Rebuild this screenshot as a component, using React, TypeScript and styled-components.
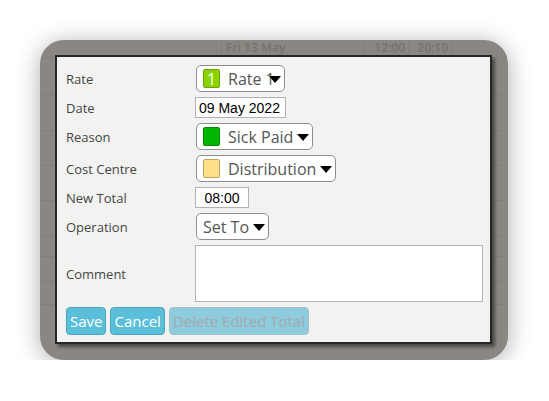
import styled, { createGlobalStyle } from 'styled-components';

const GlobalStyle = createGlobalStyle`
  body {
    margin: 0;
    background: #ffffff;
    font-family: "Open Sans", "Liberation Sans", sans-serif;
  }
`

const swatches: Record<string, { bg: string, border: string }> = {
  rate: { bg: '#8cd400', border: '#6e9e0a' },
  sick: { bg: '#00b600', border: '#078a07' },
  dist: { bg: '#ffdf88', border: '#c3a35c' },
}

const behindRows = [
  { h: 17, cells: ['', 'Fri 13 May', '12:00', '20:10', ''] },
  { h: 36, cells: ['', '', '', '', ''] },
  { h: 35, cells: ['', '', '', '', ''] },
  { h: 34, cells: ['', '', '', '', ''] },
  { h: 34, cells: ['', '', '', '', ''] },
  { h: 34, cells: ['', '', '', '', ''] },
  { h: 20, cells: ['', '', '', '', ''] },
  { h: 24, cells: ['', '', '', '', ''] },
  { h: 22, cells: ['', '', '', '', ''] },
]

const Select = (props: { text: string, swatch?: string, mark?: string, width?: number }) => {
  const sw = props.swatch ? swatches[props.swatch] : null
  return (
    <SelectBox fixedWidth={props.width}>
      {sw && <Swatch bg={sw.bg} edge={sw.border}>{props.mark}</Swatch>}
      <SelectText>{props.text}</SelectText>
      <Arrow />
    </SelectBox>
  )
}

const App = () => {
  return (
    <Page>
      <GlobalStyle />
      <Frame>
        <Behind>
          {behindRows.map((row, i) => (
            <BehindRow key={i} h={row.h}>
              {row.cells.map((c, j) => (
                <BehindCell key={j} col={j}>{c}</BehindCell>
              ))}
            </BehindRow>
          ))}
        </Behind>
        <Dialog>
          <Form>
            <Label>Rate</Label>
            <Select text="Rate 1" swatch="rate" mark="1" width={89} />

            <Label>Date</Label>
            <TextInput w={91} defaultValue="09 May 2022" />

            <Label>Reason</Label>
            <Select text="Sick Paid" swatch="sick" />

            <Label>Cost Centre</Label>
            <Select text="Distribution" swatch="dist" />

            <Label>New Total</Label>
            <TextInput w={54} center defaultValue="08:00" />

            <Label>Operation</Label>
            <Select text="Set To" />

            <Label>Comment</Label>
            <Comment />

            <Buttons>
              <Button>Save</Button>
              <Button>Cancel</Button>
              <Button disabled>Delete Edited Total</Button>
            </Buttons>
          </Form>
        </Dialog>
      </Frame>
    </Page>
  )
}

export default App

const Page = styled.div`
padding: 40px 0 0 40px;
`

const Frame = styled.div`
position: relative;
width: 468px;
height: 320px;
box-sizing: border-box;
padding: 15px;
border-radius: 24px;
overflow: hidden;
background: #8a8681;
box-shadow: 0 3px 24px rgba(0, 0, 0, 0.32);
`

const Behind = styled.div`
position: absolute;
inset: 0;
display: flex;
flex-direction: column;
`

const BehindRow = styled.div<{ h: number }>`
display: grid;
grid-template-columns: 181px 142px 45px 44px 1fr;
flex: 0 0 ${p => p.h}px;
border-bottom: 1px solid #837f7a;
`

const BehindCell = styled.div<{ col: number }>`
border-left: ${p => (p.col > 0 && p.col < 4 ? '1px solid #837f7a' : 'none')};
border-right: ${p => (p.col === 3 ? '1px solid #837f7a' : 'none')};
padding: 1px ${p => (p.col === 1 ? 4 : 3)}px 0;
text-align: ${p => (p.col === 1 ? 'left' : 'right')};
font-size: 12px;
font-weight: 600;
line-height: 14px;
color: #77736d;
overflow: hidden;
white-space: nowrap;
`

const Dialog = styled.div`
position: relative;
z-index: 1;
width: 437px;
height: 289px;
box-sizing: border-box;
padding: 8px 9px 0 9px;
background: #f2f2f0;
border: 2px solid #262626;
box-shadow: 3px 3px 3px rgba(0, 0, 0, 0.45);
`

const Form = styled.div`
display: grid;
grid-template-columns: 129px 1fr;
row-gap: 5px;
align-items: center;
`

const Label = styled.div`
font-size: 13px;
color: #454545;
`

const SelectBox = styled.div<{ fixedWidth?: number }>`
position: relative;
justify-self: start;
display: inline-flex;
align-items: center;
gap: 8px;
height: 27px;
width: ${p => (p.fixedWidth ? `${p.fixedWidth}px` : 'auto')};
box-sizing: border-box;
margin-left: 1px;
padding: 0 19px 0 6px;
background: #ffffff;
border: 1px solid #8e8e8e;
border-radius: 5px;
`

const Swatch = styled.div<{ bg: string, edge: string }>`
flex: 0 0 auto;
width: 17px;
height: 19px;
box-sizing: border-box;
display: flex;
align-items: center;
justify-content: center;
background: ${p => p.bg};
border: 1px solid ${p => p.edge};
border-radius: 2px;
color: #ffffff;
font-size: 16px;
line-height: 1;
`

const SelectText = styled.span`
font-size: 16px;
color: #555555;
white-space: nowrap;
`

const Arrow = styled.span`
position: absolute;
right: 3px;
top: 10px;
width: 0;
height: 0;
border-left: 6px solid transparent;
border-right: 6px solid transparent;
border-top: 7px solid #000000;
`

const TextInput = styled.input<{ w: number, center?: boolean }>`
justify-self: start;
width: ${p => p.w}px;
height: 21px;
box-sizing: border-box;
padding: 0 3px;
border: 1px solid #b2b2b2;
background: #ffffff;
font-family: "Liberation Sans", Arial, sans-serif;
font-size: 14px;
color: #000000;
text-align: ${p => (p.center ? 'center' : 'left')};
outline: none;
`

const Comment = styled.textarea`
width: 288px;
height: 57px;
box-sizing: border-box;
border: 1px solid #b4b4b4;
background: #ffffff;
resize: none;
margin: 0;
`

const Buttons = styled.div`
grid-column: 1 / -1;
display: flex;
gap: 4px;
`

const Button = styled.button`
height: 28px;
box-sizing: border-box;
padding: 0 3px;
border-radius: 4px;
border: 1px solid #4aa6bf;
background: #5bbfd9;
color: #ffffff;
font-family: "Open Sans", sans-serif;
font-size: 15px;
&:disabled {
  background: #8ecbdc;
  border-color: #a2c2ca;
  color: #a3aaad;
}
`
